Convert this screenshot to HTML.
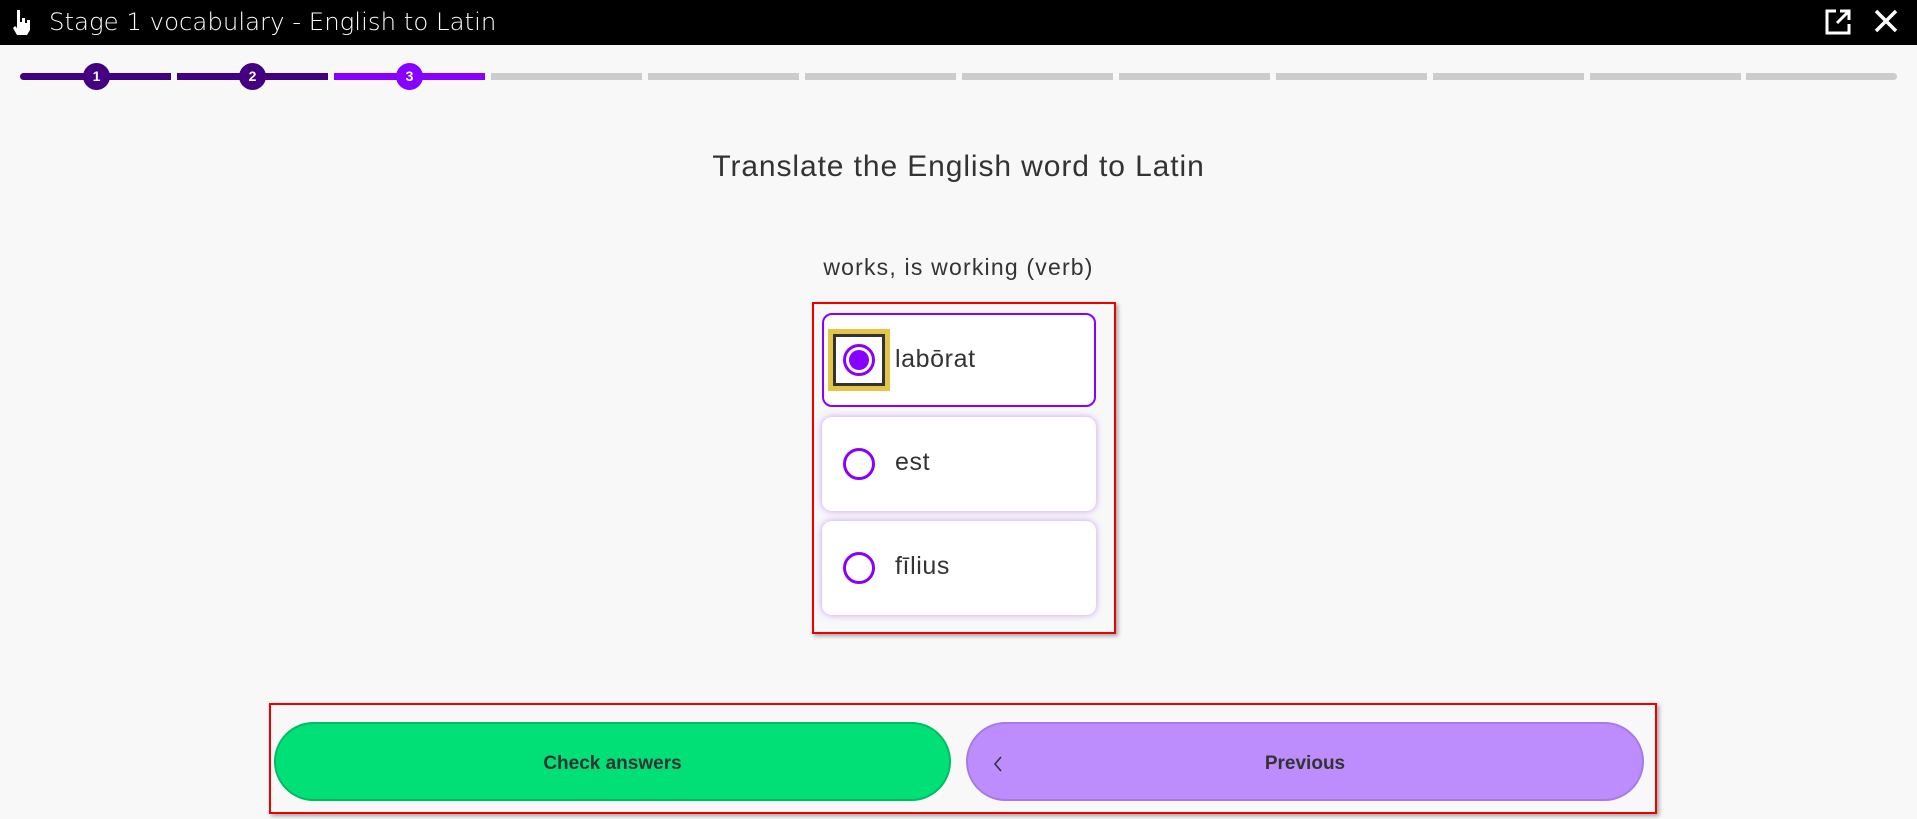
<!DOCTYPE html>
<html><head><meta charset="utf-8"><style>
*{box-sizing:border-box;margin:0;padding:0}
body{width:1917px;height:819px;background:#f8f8f8;font-family:"Liberation Sans",sans-serif;position:relative;overflow:hidden;color:#333}
.hdr{position:absolute;left:0;top:0;width:1917px;height:45px;background:#000;color:#fff}
.hdr .t{position:absolute;left:49px;top:7px;font-size:24.4px;font-family:"DejaVu Sans",sans-serif;font-weight:300}
.seg{position:absolute;top:73px;height:7px;width:151px;background:#ccc}
.dot{position:absolute;top:63px;width:27px;height:27px;border-radius:50%;color:#fff;font-weight:bold;font-size:14px;text-align:center;line-height:27px}
.h1{position:absolute;left:0;width:1917px;text-align:center;top:150px;font-size:30px;letter-spacing:0.9px}
.h2{position:absolute;left:0;width:1917px;text-align:center;top:254px;font-size:23px;letter-spacing:1.2px}
.rb{position:absolute;border:2px solid #e00;box-shadow:2px 2px 4px rgba(0,0,0,.35)}
.card{position:absolute;left:822px;width:274px;height:94px;background:#fff;border-radius:10px;box-shadow:0 0 7px rgba(170,90,240,.6)}
.card .r{position:absolute;left:21px;top:31px;width:32px;height:32px;border:3px solid #8800ff;border-radius:50%}
.card .l{position:absolute;left:73px;top:31px;font-size:25px;letter-spacing:0.6px;color:#333}
.btn{position:absolute;top:722px;height:79px;border-radius:40px;font-weight:bold;font-size:19px;text-align:center;line-height:79px;color:#333}
</style></head><body>
<div class="hdr">
<svg style="position:absolute;left:11px;top:8px" width="22" height="28" viewBox="0 0 22 28"><path d="M6 2h3v12h2v-4h3v5h2v-3h3v10l-3 5H6l-4-7 2-2 2 2z" fill="#fff"/></svg>
<div class="t">Stage 1 vocabulary - English to Latin</div>
<svg style="position:absolute;left:1824px;top:8px" width="28" height="28" viewBox="0 0 28 28" fill="none" stroke="#fff" stroke-width="3"><path d="M12 3H3v22h22v-9"/><path d="M16 3h9v9M25 3L13 15"/></svg>
<svg style="position:absolute;left:1873px;top:8px" width="26" height="26" viewBox="0 0 26 26" stroke="#fff" stroke-width="3.5"><path d="M3 3l20 20M23 3L3 23"/></svg>
</div>
<div class="seg" style="left:20px;background:#440080;border-radius:4px 0 0 4px"></div>
<div class="seg" style="left:177px;background:#440080"></div>
<div class="seg" style="left:334px;background:#8800ff"></div>
<div class="seg" style="left:491px"></div><div class="seg" style="left:648px"></div><div class="seg" style="left:805px"></div><div class="seg" style="left:962px"></div><div class="seg" style="left:1119px"></div><div class="seg" style="left:1276px"></div><div class="seg" style="left:1433px"></div><div class="seg" style="left:1590px"></div><div class="seg" style="left:1746px;border-radius:0 4px 4px 0"></div>
<div class="dot" style="left:83px;background:#440080">1</div>
<div class="dot" style="left:239px;background:#440080">2</div>
<div class="dot" style="left:396px;background:#8800ff">3</div>
<div class="h1">Translate the English word to Latin</div>
<div class="h2">works, is working (verb)</div>
<div class="rb" style="left:812px;top:302px;width:304px;height:332px"></div>
<div class="card" style="top:313px;border:2px solid #8800ff;box-shadow:none">
<div style="position:absolute;left:4px;top:14px;width:62px;height:62px;background:#e6c44a"></div>
<div style="position:absolute;left:9px;top:19px;width:52px;height:52px;border:3px solid #333;background:#fff"></div>
<div class="r" style="left:19px;top:29px;padding:3px"><div style="width:20px;height:20px;border-radius:50%;background:#8800ff"></div></div>
<div class="l" style="left:71px;top:30px">labōrat</div></div>
<div class="card" style="top:417px"><div class="r"></div><div class="l">est</div></div>
<div class="card" style="top:521px"><div class="r"></div><div class="l">fīlius</div></div>
<div class="rb" style="left:269px;top:703px;width:1388px;height:111px"></div>
<div class="btn" style="left:274px;width:677px;background:#00e077;border:2px solid #00bb63">Check answers</div>
<div class="btn" style="left:966px;width:678px;background:#bd8cfd;border:2px solid #a57ae6">Previous
<svg style="position:absolute;left:24px;top:31px" width="12" height="18" viewBox="0 0 12 18" fill="none" stroke="#333" stroke-width="1.6"><path d="M9 2L3 9l6 7"/></svg></div>
</body></html>
